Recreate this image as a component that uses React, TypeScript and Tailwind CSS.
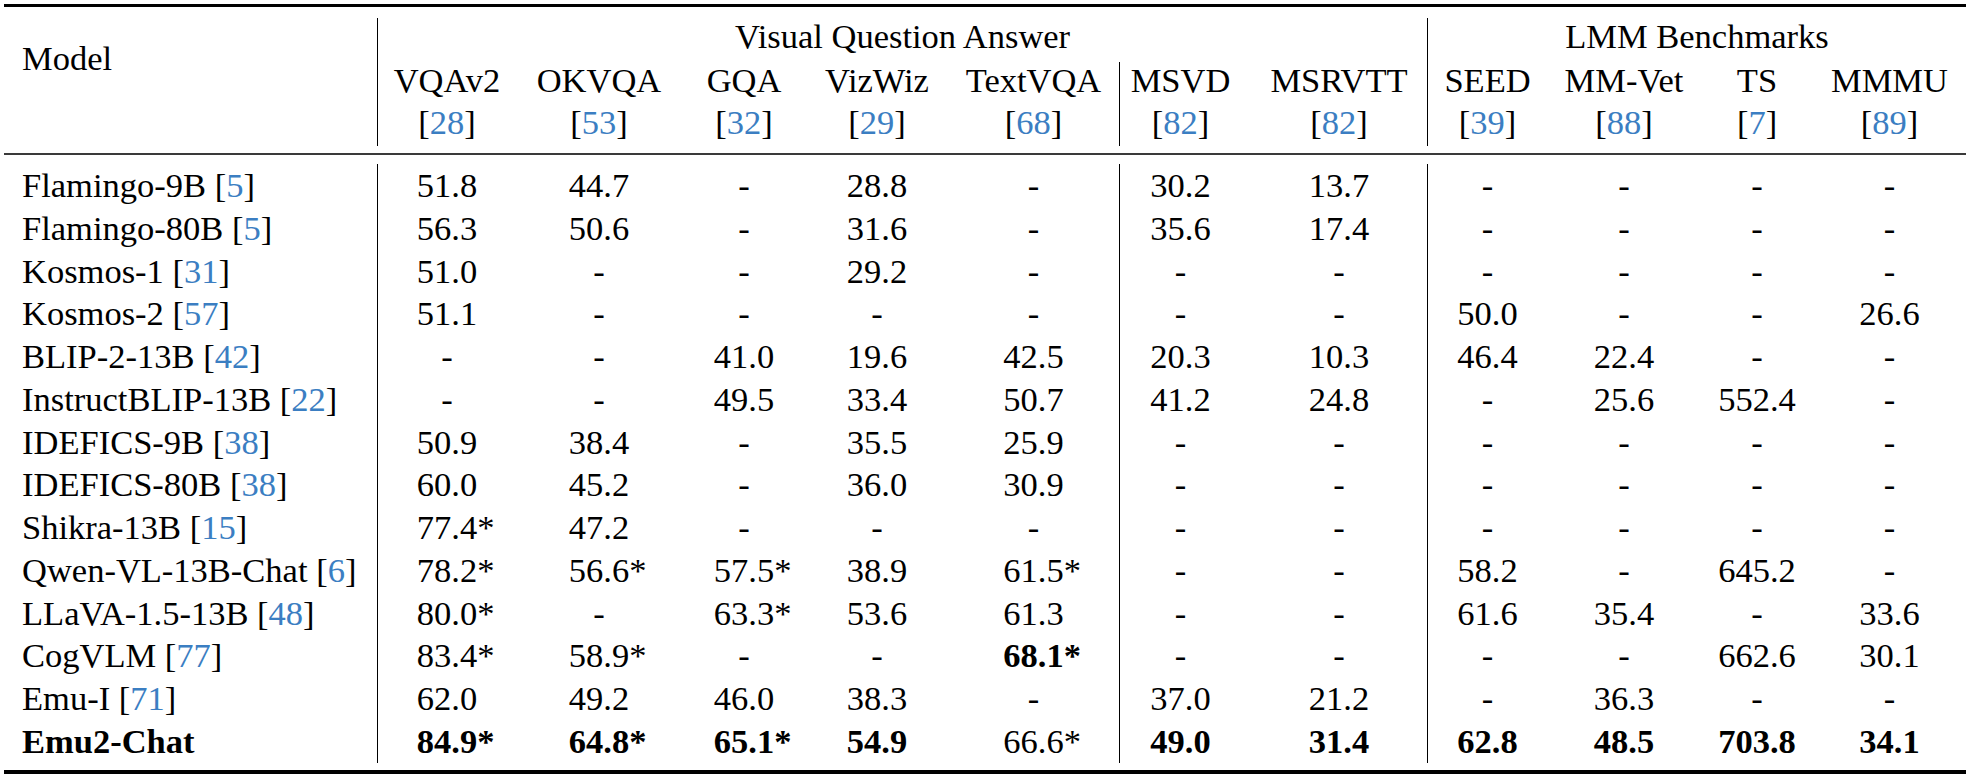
import React from 'react';

const COLS =
  'grid grid-cols-[374px_138px_166px_124px_142px_171px_122px_186px_120px_154px_112px_153px]';

// per data column: extra classes (vertical rules and small centring nudges)
const COL_EXTRA = [
  '',
  '',
  '',
  '',
  '',
  'border-l-[1.5px] border-black',
  'pl-[10px]',
  'border-l-[1.5px] border-black',
  '',
  '',
  '',
];

const BENCH = [
  { name: 'VQAv2', ref: '28' },
  { name: 'OKVQA', ref: '53' },
  { name: 'GQA', ref: '32' },
  { name: 'VizWiz', ref: '29' },
  { name: 'TextVQA', ref: '68' },
  { name: 'MSVD', ref: '82' },
  { name: 'MSRVTT', ref: '82' },
  { name: 'SEED', ref: '39' },
  { name: 'MM-Vet', ref: '88' },
  { name: 'TS', ref: '7' },
  { name: 'MMMU', ref: '89' },
];

type Row = { model: string; ref?: string; bold?: boolean; vals: string[] };

// "b:" marks a bold cell
const ROWS: Row[] = [
  { model: 'Flamingo-9B', ref: '5', vals: ['51.8', '44.7', '-', '28.8', '-', '30.2', '13.7', '-', '-', '-', '-'] },
  { model: 'Flamingo-80B', ref: '5', vals: ['56.3', '50.6', '-', '31.6', '-', '35.6', '17.4', '-', '-', '-', '-'] },
  { model: 'Kosmos-1', ref: '31', vals: ['51.0', '-', '-', '29.2', '-', '-', '-', '-', '-', '-', '-'] },
  { model: 'Kosmos-2', ref: '57', vals: ['51.1', '-', '-', '-', '-', '-', '-', '50.0', '-', '-', '26.6'] },
  { model: 'BLIP-2-13B', ref: '42', vals: ['-', '-', '41.0', '19.6', '42.5', '20.3', '10.3', '46.4', '22.4', '-', '-'] },
  { model: 'InstructBLIP-13B', ref: '22', vals: ['-', '-', '49.5', '33.4', '50.7', '41.2', '24.8', '-', '25.6', '552.4', '-'] },
  { model: 'IDEFICS-9B', ref: '38', vals: ['50.9', '38.4', '-', '35.5', '25.9', '-', '-', '-', '-', '-', '-'] },
  { model: 'IDEFICS-80B', ref: '38', vals: ['60.0', '45.2', '-', '36.0', '30.9', '-', '-', '-', '-', '-', '-'] },
  { model: 'Shikra-13B', ref: '15', vals: ['77.4*', '47.2', '-', '-', '-', '-', '-', '-', '-', '-', '-'] },
  { model: 'Qwen-VL-13B-Chat', ref: '6', vals: ['78.2*', '56.6*', '57.5*', '38.9', '61.5*', '-', '-', '58.2', '-', '645.2', '-'] },
  { model: 'LLaVA-1.5-13B', ref: '48', vals: ['80.0*', '-', '63.3*', '53.6', '61.3', '-', '-', '61.6', '35.4', '-', '33.6'] },
  { model: 'CogVLM', ref: '77', vals: ['83.4*', '58.9*', '-', '-', 'b:68.1*', '-', '-', '-', '-', '662.6', '30.1'] },
  { model: 'Emu-I', ref: '71', vals: ['62.0', '49.2', '46.0', '38.3', '-', '37.0', '21.2', '-', '36.3', '-', '-'] },
  {
    model: 'Emu2-Chat',
    bold: true,
    vals: ['b:84.9*', 'b:64.8*', 'b:65.1*', 'b:54.9', '66.6*', 'b:49.0', 'b:31.4', 'b:62.8', 'b:48.5', 'b:703.8', 'b:34.1'],
  },
];

function Cite({ n }: { n: string }) {
  return (
    <>
      [<span className="text-[#3b7ec2]">{n}</span>]
    </>
  );
}

function Val({ v }: { v: string }) {
  const bold = v.startsWith('b:');
  const raw = bold ? v.slice(2) : v;
  const star = raw.endsWith('*');
  const num = star ? raw.slice(0, -1) : raw;
  return (
    <span className={`whitespace-nowrap ${bold ? 'font-bold' : ''}`}>
      {num}
      {/* asterisk hangs outside the centred number, as in the paper */}
      {star && <span className="inline-block w-0">*</span>}
    </span>
  );
}

export default function App() {
  return (
    <div className="w-[1971px] h-[781px] overflow-hidden bg-white text-black font-[family-name:'Liberation_Serif','Times_New_Roman',serif] text-[34.5px]">
      <div className="ml-[4px] w-[1962px]">
        {/* Top rule */}
        <div className="mt-[4px] h-[3px] bg-black" />

        {/* Header */}
        <div className={`${COLS} mt-[11px] leading-[36px]`}>
          <div className="row-span-3 border-r-[1.5px] border-black pl-[18px] pt-[22px]">Model</div>
          <div className="col-span-7 h-[36px] text-center">Visual Question Answer</div>
          <div className="col-span-4 h-[36px] border-l-[1.5px] border-black text-center">LMM Benchmarks</div>

          {BENCH.map((b, i) => (
            <div
              key={b.name}
              className={`pt-[8px] text-center ${i === 7 ? 'border-l-[1.5px] border-black' : ''} ${i === 6 ? 'pl-[10px]' : ''}`}
            >
              <div className={`h-[36px] ${i === 5 ? 'border-l-[1.5px] border-black' : ''}`}>{b.name}</div>
            </div>
          ))}

          {BENCH.map((b, i) => (
            <div key={b.name + '-ref'} className={`h-[48px] py-[6px] text-center ${COL_EXTRA[i]}`}>
              <Cite n={b.ref} />
            </div>
          ))}
        </div>

        {/* Mid rule */}
        <div className="mt-[7px] h-[2px] bg-[#3a3a3a]" />

        {/* Body */}
        <div className="mt-[9px]">
          {ROWS.map((r) => (
            <div key={r.model} className={`${COLS} h-[42.77px] leading-[42.77px]`}>
              <div className={`border-r-[1.5px] border-black pl-[18px] whitespace-nowrap ${r.bold ? 'font-bold' : ''}`}>
                {r.model}
                {r.ref && (
                  <>
                    {' '}
                    <Cite n={r.ref} />
                  </>
                )}
              </div>
              {r.vals.map((v, i) => (
                <div key={i} className={`text-center ${COL_EXTRA[i]}`}>
                  <Val v={v} />
                </div>
              ))}
            </div>
          ))}
        </div>

        {/* Bottom rule */}
        <div className="mt-[7px] h-[4px] bg-black" />
      </div>
    </div>
  );
}
